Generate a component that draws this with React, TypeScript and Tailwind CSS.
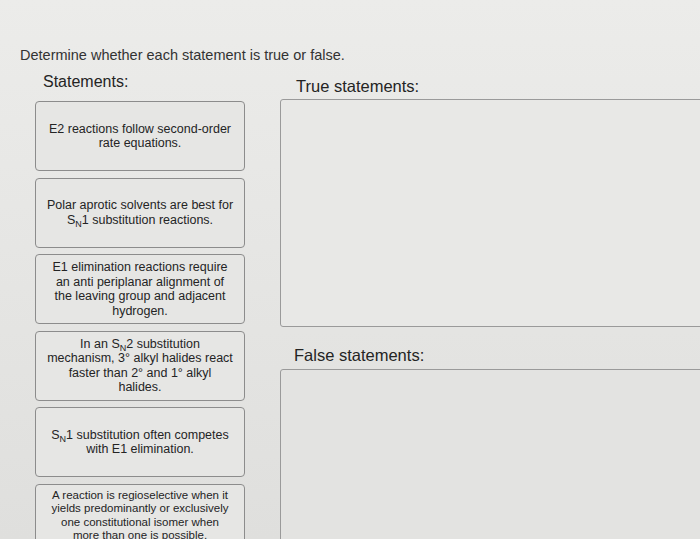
import React from "react"

// S with a subscript N, as in SN1 / SN2
function SN({ n }: { n: string }) {
  return (
    <span className="whitespace-nowrap">
      S<span className="relative top-[3px] text-[9px] leading-none">N</span>
      {n}
    </span>
  )
}

const statements: { key: string; body: React.ReactNode; small?: boolean }[] = [
  { key: "e2", body: <>E2 reactions follow second-order<br />rate equations.</> },
  {
    key: "polar",
    body: <>Polar aprotic solvents are best for<br /><SN n="1" /> substitution reactions.</>,
  },
  {
    key: "e1",
    body: (
      <>
        E1 elimination reactions require<br />an anti periplanar alignment of<br />the leaving group and adjacent<br />hydrogen.
      </>
    ),
  },
  {
    key: "sn2",
    body: (
      <>
        In an <SN n="2" /> substitution<br />mechanism, 3° alkyl halides react<br />faster than 2° and 1° alkyl<br />halides.
      </>
    ),
  },
  {
    key: "sn1",
    body: <><SN n="1" /> substitution often competes<br />with E1 elimination.</>,
  },
  {
    key: "regio",
    small: true,
    body: (
      <>
        A reaction is regioselective when it<br />yields predominantly or exclusively<br />one constitutional isomer when<br />more than one is possible.
      </>
    ),
  },
]

export default function App() {
  return (
    <div
      className="h-[539px] w-[700px] overflow-hidden bg-gradient-to-b from-[#ececea] to-[#dfdfdd] text-[#242424]"
      style={{ fontFamily: '"Liberation Sans", Arial, sans-serif' }}
    >
      <div className="pt-[46px] pl-[20px]">
        <p className="text-[14.5px] leading-[18px] text-[#333]">Determine whether each statement is true or false.</p>

        <div className="flex">
          {/* Draggable statements */}
          <div className="ml-[15px] w-[210px] shrink-0">
            <h2 className="mt-[8px] pl-[8px] text-[16px] leading-[20px]">Statements:</h2>
            <div className="mt-[9px] flex flex-col gap-[6.5px]">
              {statements.map((s) => (
                <div
                  key={s.key}
                  className={`flex h-[70px] justify-center overflow-hidden rounded-[4px] border border-[#8c8c8c] bg-[#e6e6e4] px-1 text-center ${
                    s.small ? "items-start pt-[4px] text-[11.5px] leading-[13.5px]" : "items-center text-[12.5px] leading-[14.5px]"
                  }`}
                >
                  <p>{s.body}</p>
                </div>
              ))}
            </div>
          </div>

          {/* Drop targets */}
          <div className="ml-[35px] flex-1">
            <h2 className="mt-[12px] pl-[16px] text-[16.5px] leading-[20px]">True statements:</h2>
            <div className="mt-[3px] h-[228px] w-[460px] rounded-[3px] border border-[#9a9a9a] bg-[#e8e8e6]" />
            <h2 className="mt-[18px] pl-[14px] text-[16.5px] leading-[20px]">False statements:</h2>
            <div className="mt-[4px] h-[220px] w-[460px] rounded-[3px] border border-[#9a9a9a] bg-[#e3e3e1]" />
          </div>
        </div>
      </div>
    </div>
  )
}
